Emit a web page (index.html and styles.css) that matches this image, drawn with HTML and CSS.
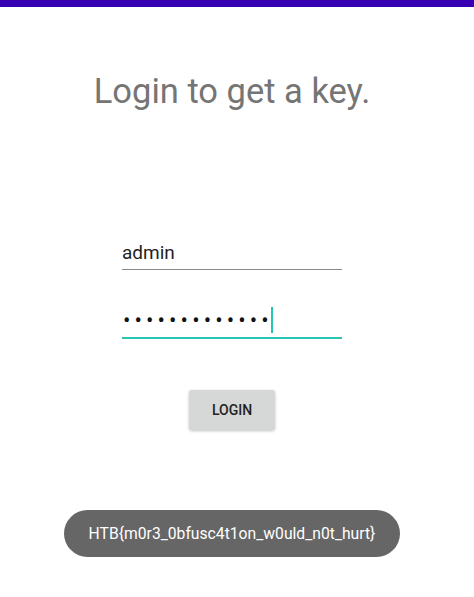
FILE: index.html
```html
<!DOCTYPE html>
<html lang="en">
<head>
    <meta charset="UTF-8">
    <meta name="viewport" content="width=device-width, initial-scale=1.0">
    <title>Login</title>
    <link rel="stylesheet" href="styles.css">
</head>
<body>
    <div class="status-bar"></div>
    <div class="screen">
        <h1 class="title">Login to get a key.</h1>
        <div class="form">
            <div class="field">
                <span class="field-text">admin</span>
            </div>
            <div class="field focused">
                <span class="dots">•••••••••••••</span><span class="cursor"></span>
            </div>
        </div>
        <button class="login-btn">LOGIN</button>
        <div class="toast">HTB{m0r3_0bfusc4t1on_w0uld_n0t_hurt}</div>
    </div>
</body>
</html>
```

FILE: styles.css
```css
body {
    margin: 0;
    padding: 0;
    background: #ffffff;
    font-family: Roboto, "Noto Sans", sans-serif;
    height: 597px;
    overflow: hidden;
}
.status-bar {
    height: 7px;
    background: #3700b3;
}
.screen {
    width: 464px;
    display: flex;
    flex-direction: column;
    align-items: center;
}
.title {
    margin: 64px 0 0 0;
    font-size: 34.5px;
    font-weight: normal;
    color: #757575;
    line-height: 40px;
}
.form {
    width: 220px;
    margin-top: 123px;
    display: flex;
    flex-direction: column;
    gap: 30px;
}
.field {
    height: 36px;
    border-bottom: 1px solid #8a8a8a;
    display: flex;
    align-items: center;
    box-sizing: border-box;
}
.field.focused {
    border-bottom: 2px solid #26c6b4;
    height: 39px;
}
.field-text {
    font-size: 19px;
    color: #1f1f1f;
    margin-top: 2px;
}
.dots {
    font-size: 22px;
    letter-spacing: 4.1px;
    color: #111;
    margin-top: 4px;
    margin-left: 1px;
}
.cursor {
    width: 2px;
    height: 26px;
    background: #26c6b4;
    margin-left: -2px;
    margin-top: 3px;
}
.login-btn {
    margin-top: 51px;
    width: 86px;
    height: 40px;
    border: none;
    border-radius: 3px;
    background: #d6d7d7;
    box-shadow: 0 1px 3px rgba(0, 0, 0, 0.25);
    font-family: Roboto, sans-serif;
    font-weight: 500;
    font-size: 14px;
    color: #222;
}
.toast {
    margin-top: 80px;
    width: 336px;
    height: 47px;
    border-radius: 24px;
    background: #666666;
    color: #ffffff;
    font-size: 15.7px;
    display: flex;
    align-items: center;
    justify-content: center;
}
```
